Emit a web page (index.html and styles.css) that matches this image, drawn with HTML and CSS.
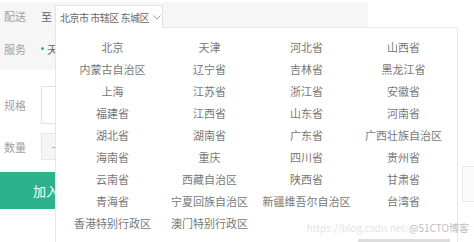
FILE: index.html
```html
<!DOCTYPE html>
<html lang="zh">
<head>
<meta charset="utf-8">
<link rel="stylesheet" href="styles.css">
</head>
<body>
<div class="page">
  <section class="delivery">
    <div class="row row-ship">
      <span class="label">配送</span>
      <span class="to">至</span>
      <div class="selector">
        <span class="sel-text">北京市 市辖区 东城区</span>
        <svg class="chev" width="8" height="5" viewBox="0 0 8 5"><path d="M0.5 0.5 L4 4 L7.5 0.5" fill="none" stroke="#999" stroke-width="1"/></svg>
      </div>
    </div>
    <div class="row row-service">
      <span class="label">服务</span>
      <span class="dot"></span><span class="svc">天猫</span>
    </div>
  </section>
  <div class="row row-spec">
    <span class="label">规格</span>
    <div class="spec-box"></div>
  </div>
  <div class="row row-qty">
    <span class="label">数量</span>
    <div class="qty-box">-</div>
  </div>
  <div class="buy">加入购物车</div>

  <div class="side-box"></div>

  <div class="panel">
    <div class="grid">
      <span>北京</span><span>天津</span><span>河北省</span><span>山西省</span>
      <span>内蒙古自治区</span><span>辽宁省</span><span>吉林省</span><span>黑龙江省</span>
      <span>上海</span><span>江苏省</span><span>浙江省</span><span>安徽省</span>
      <span>福建省</span><span>江西省</span><span>山东省</span><span>河南省</span>
      <span>湖北省</span><span>湖南省</span><span>广东省</span><span>广西壮族自治区</span>
      <span>海南省</span><span>重庆</span><span>四川省</span><span>贵州省</span>
      <span>云南省</span><span>西藏自治区</span><span>陕西省</span><span>甘肃省</span>
      <span>青海省</span><span>宁夏回族自治区</span><span>新疆维吾尔自治区</span><span>台湾省</span>
      <span>香港特别行政区</span><span>澳门特别行政区</span>
    </div>
  </div>

  <div class="watermark"><span class="wm-url">https://blog.csdn.net/</span><span class="wm-brand">@51CTO博客</span></div>
  <div class="bottom-bar"></div>
</div>
</body>
</html>
```
FILE: styles.css
```css
html, body {
  margin: 0;
  padding: 0;
  background: #fff;
}
body {
  font-family: "Noto Sans CJK SC", "Noto Sans", sans-serif;
  font-size: 11px;
  color: #666;
}
.page {
  position: relative;
  width: 474px;
  height: 242px;
  overflow: hidden;
}
.delivery {
  margin-top: 2px;
  width: 368px;
  height: 68px;
  background: #f6f6f6;
}
.row {
  display: flex;
  align-items: center;
}
.label {
  width: 37px;
  padding-left: 4px;
  color: #a0a0a0;
  font-size: 11px;
}
.row-ship {
  height: 25px;
  align-items: flex-end;
}
.row-ship .label,
.row-ship .to {
  align-self: center;
  margin-top: 3px;
}
.to {
  width: 14px;
  color: #666;
}
.selector {
  position: relative;
  z-index: 2;
  box-sizing: border-box;
  width: 108px;
  height: 23px;
  margin-bottom: -1px;
  background: #fff;
  border: 1px solid #e4e4e4;
  border-bottom: none;
  display: flex;
  align-items: center;
  padding-left: 4px;
  gap: 4px;
}
.sel-text {
  font-size: 10px;
  letter-spacing: -0.5px;
  color: #666;
  white-space: nowrap;
}
.chev {
  flex: none;
}
.row-service {
  height: 43px;
}
.dot {
  width: 3px;
  height: 3px;
  border-radius: 50%;
  background: #2cb38e;
  margin-right: 3px;
}
.svc {
  color: #666;
}
.row-spec {
  margin-top: 16px;
  height: 38px;
}
.spec-box {
  box-sizing: border-box;
  width: 30px;
  height: 38px;
  border: 1px solid #e2e2e2;
}
.row-qty {
  margin-top: 9px;
  height: 27px;
}
.qty-box {
  box-sizing: border-box;
  width: 30px;
  height: 27px;
  background: #f5f5f5;
  border: 1px solid #e6e6e6;
  padding-left: 10px;
  line-height: 25px;
  color: #888;
}
.buy {
  margin-top: 12px;
  width: 140px;
  height: 37px;
  background: #2cb38e;
  color: #fff;
  font-size: 13px;
  line-height: 37px;
  padding-left: 33px;
  box-sizing: border-box;
}
.side-box {
  position: absolute;
  left: 462px;
  top: 166px;
  width: 40px;
  height: 34px;
  border: 1px solid #eaeaea;
  background: #fafafa;
}
.panel {
  position: absolute;
  left: 55px;
  top: 27px;
  z-index: 1;
  box-sizing: border-box;
  width: 403px;
  height: 230px;
  background: #fff;
  border: 1px solid #e6e6e6;
  padding: 8px 8px 0 8px;
}
.grid {
  display: grid;
  grid-template-columns: repeat(4, 97px);
  grid-auto-rows: 22px;
  align-items: center;
  justify-items: center;
  color: #777;
  font-size: 11px;
}
.grid span {
  white-space: nowrap;
}
.watermark {
  position: absolute;
  right: 5px;
  top: 220px;
  z-index: 3;
  font-size: 10px;
  white-space: nowrap;
}
.wm-url {
  color: #e4e4e4;
}
.wm-brand {
  color: #c0c0c0;
}
.bottom-bar {
  position: absolute;
  left: 358px;
  top: 239px;
  z-index: 3;
  width: 92px;
  height: 3px;
  background: #dcdcdc;
}
```
